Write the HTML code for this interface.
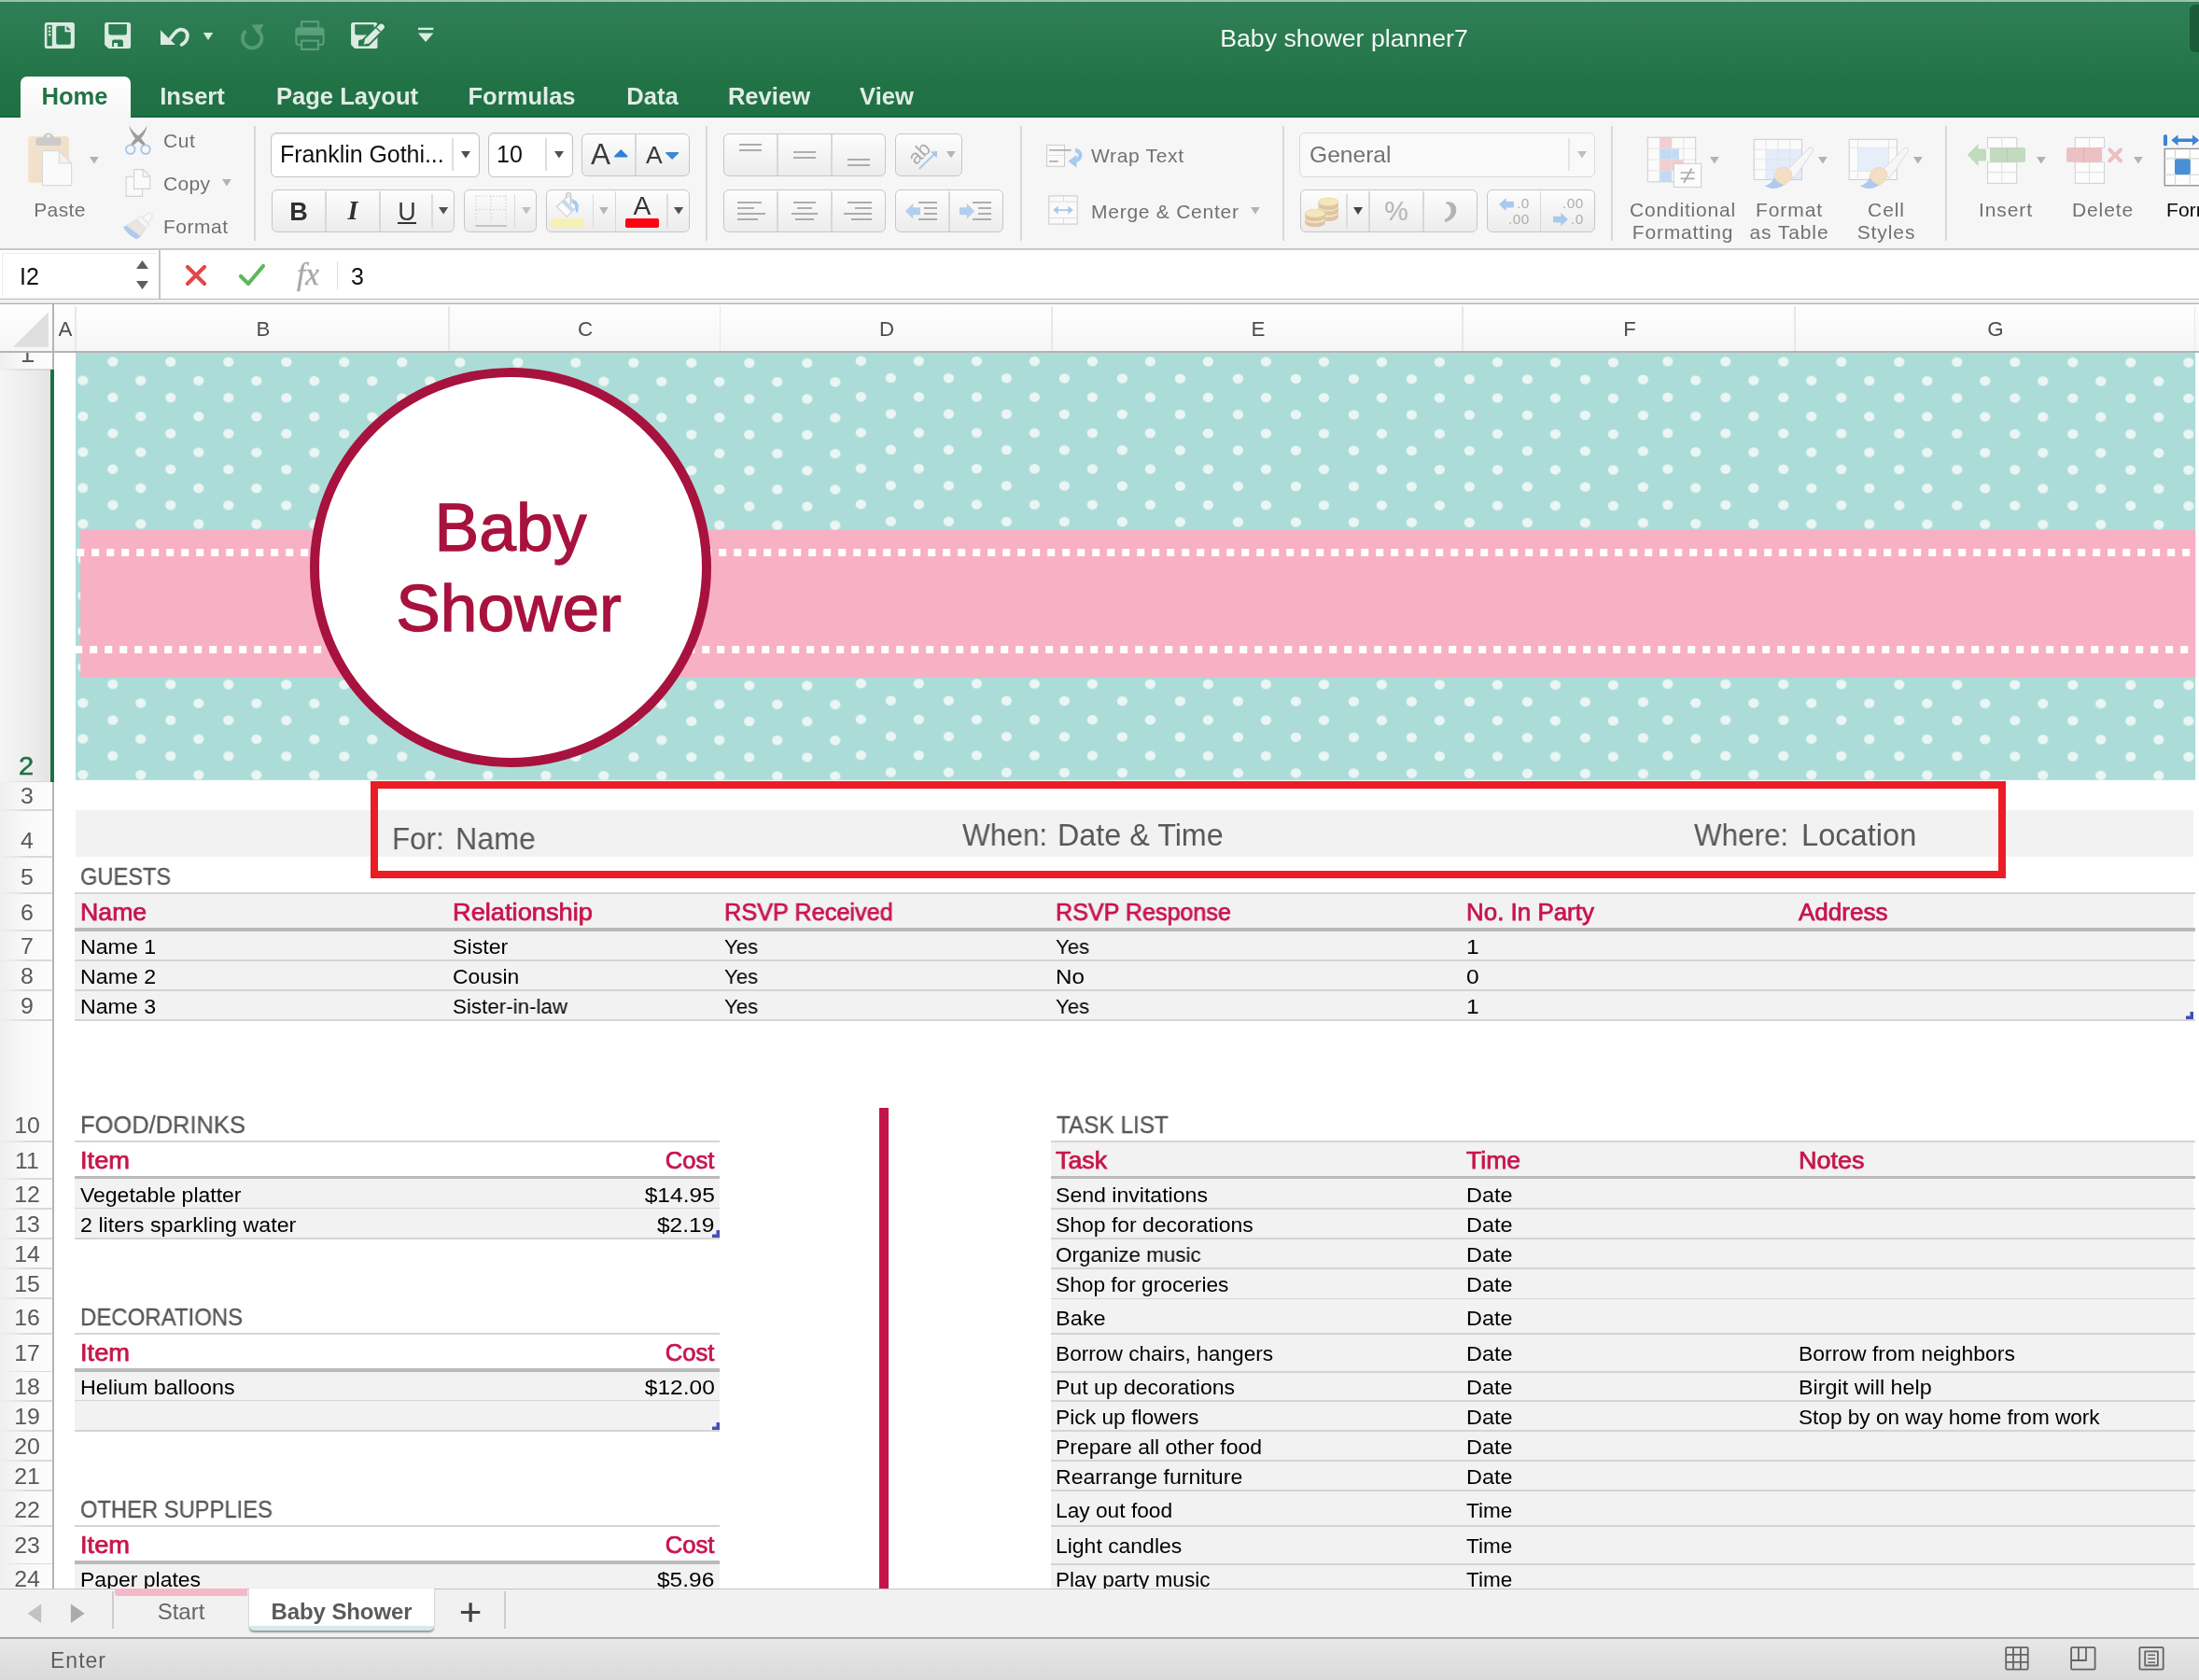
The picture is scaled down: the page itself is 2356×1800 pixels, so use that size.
<!DOCTYPE html>
<html lang="en"><head><meta charset="utf-8"><title>Baby shower planner7</title>
<style>
html,body{margin:0;padding:0;}
body{width:2356px;height:1800px;overflow:hidden;background:#fff;font-family:"Liberation Sans",sans-serif;position:relative;}
.a{position:absolute;box-sizing:border-box;}
.t{position:absolute;white-space:pre;line-height:1;will-change:transform;}
svg{position:absolute;overflow:visible;}
.btn{position:absolute;box-sizing:border-box;border:1.5px solid #c6c6c6;border-radius:6px;background:linear-gradient(#fdfdfd,#ececec);}
.box{position:absolute;box-sizing:border-box;border:1.5px solid #c3c3c3;border-radius:6px;background:#fff;}
.vd{position:absolute;width:1.5px;background:#d8d8d8;}
</style></head>
<body>
<div class="a" style="left:0px;top:0px;width:2356px;height:126px;background:linear-gradient(#2f7e55 0%,#2b7b51 30%,#217346 70%,#1f7145 100%);"></div>
<div class="a" style="left:0px;top:0px;width:2356px;height:1.6px;background:#9cc2ad;"></div>
<div class="a" style="left:0px;top:124.4px;width:2356px;height:1.6px;background:#186640;"></div>
<div class="a" style="left:2346px;top:5px;width:20px;height:51px;background:#1a5c38;border-radius:6px;"></div>
<div class="t" style="top:26px;line-height:30px;font-size:26.7px;color:#f3f8f5;left:1439.5px;transform:translateX(-50%);">Baby shower planner7</div>
<svg style="left:44px;top:20px" width="440" height="40" viewBox="44 20 440 40">
<!-- sidebar/doc icon -->
<path fill="#dcebe2" fill-rule="evenodd" d="M50.300 24h27.100a2.500 2.500 0 0 1 2.500 2.500v23a2.500 2.500 0 0 1 -2.500 2.500h-27.100a2.500 2.500 0 0 1 -2.500 -2.500v-23a2.500 2.500 0 0 1 2.500 -2.500z M50.400 26.800v22.400h5.400v-22.400z M60.200 29.800a2 2 0 0 1 2 -2h7.300v6.500h6.300v11.500a2 2 0 0 1 -2 2h-11.600a2 2 0 0 1 -2 -2z M71.500 27.800l4.300 4.500h-4.300z"/>
<g fill="#dcebe2"><rect x="51.900" y="28.600" width="2.400" height="2.200"/><rect x="51.900" y="32.400" width="2.400" height="2.200"/><rect x="51.900" y="36.200" width="2.400" height="2.200"/></g>
<!-- save icon -->
<path fill="#dcebe2" fill-rule="evenodd" d="M114.600 24h23a2.500 2.500 0 0 1 2.500 2.500v23a2.500 2.500 0 0 1 -2.500 2.500h-21.200l-4.300 -4v-21.500a2.500 2.500 0 0 1 2.500 -2.500z M116.300 25.900v9.500a2 2 0 0 0 2 2h15.600a2 2 0 0 0 2 -2v-9.500z M120.100 44.500a2 2 0 0 1 2 -2h7.800a2 2 0 0 1 2 2v5.600h-5.800v-4.100h-4.200v4.100h-1.800z"/>
<!-- undo -->
<path fill="none" stroke="#dcebe2" stroke-width="3.700" stroke-linecap="round" d="M182.600 41.200l4.200 -5.400c3.200 -4.300 9 -6 12.400 -2c3.200 3.800 1.800 10.800 -4.600 14"/>
<path fill="#dcebe2" d="M172 32.300v15.600h15.900z"/>
<path fill="#dcebe2" d="M217.800 35.100h10.400l-5.200 8z"/>
<!-- redo faded -->
<g opacity=".8"><path fill="none" stroke="#63a482" stroke-width="3.600" d="M263.500 33.200a10.300 10.300 0 1 0 11 -1.500"/>
<path fill="#63a482" d="M269.500 26.600l12.600 -0.700l-5.100 11.500z"/></g>
<!-- print faded -->
<g opacity=".85" fill="none" stroke="#63a482" stroke-width="2.200" stroke-linejoin="round">
<rect x="323" y="23.200" width="18" height="8"/>
<rect x="317.400" y="30.400" width="29.200" height="17.600" rx="3"/>
<rect x="323" y="43.600" width="18" height="9.300" fill="#2a7a50"/>
</g>
<rect x="318" y="31" width="28" height="6.800" fill="#63a482" opacity=".85"/>
<!-- edit/pen icon -->
<path fill="#dcebe2" fill-rule="evenodd" d="M378.600 24h23.300a2.500 2.500 0 0 1 2.500 2.500v23a2.500 2.500 0 0 1 -2.500 2.500h-21.500l-4.300 -4v-21.500a2.500 2.500 0 0 1 2.500 -2.500z M380.200 26.200v9.200a2 2 0 0 0 2 2h16.400a2 2 0 0 0 2 -2v-9.200z M384 44.500a2 2 0 0 1 2 -2h7v6.500h-3.500v-3.500h-3v3.500h-2.500z"/>
<path d="M388.800 48.600l21.500 -21.500" stroke="#2a7a50" stroke-width="10" stroke-linecap="round" fill="none"/>
<path fill="#dcebe2" d="M380.400 52l-2.700 -2.500h26.700a2.500 2.500 0 0 1 -2.500 2.500z"/>
<path d="M394 43.400l14.600 -14.600" stroke="#dcebe2" stroke-width="6.400" stroke-linecap="round" fill="none"/>
<path d="M391.700 41.100l4.600 4.600l-6.700 2.100z" fill="#dcebe2"/>
<path d="M403.100 29.700l4.600 4.600" stroke="#2a7a50" stroke-width="1.300" fill="none"/>
<!-- customize -->
<rect x="448" y="29.700" width="16.300" height="2.300" fill="#dcebe2"/>
<path fill="#dcebe2" d="M448 35.500h16.300l-8.150 9.500z"/>
</svg>
<div class="a" style="left:22px;top:82px;width:118px;height:46px;background:#f6f6f6;border-radius:7px 7px 0 0;background:linear-gradient(#ffffff,#f6f6f6);"></div>
<div class="t" style="top:89px;line-height:28px;font-size:25.6px;color:#217346;font-weight:700;left:80.25px;transform:translateX(-50%);">Home</div>
<div class="t" style="top:89px;line-height:28px;font-size:25.6px;color:#e1ece6;font-weight:700;left:206px;transform:translateX(-50%);">Insert</div>
<div class="t" style="top:89px;line-height:28px;font-size:25.6px;color:#e1ece6;font-weight:700;left:372px;transform:translateX(-50%);">Page Layout</div>
<div class="t" style="top:89px;line-height:28px;font-size:25.6px;color:#e1ece6;font-weight:700;left:559.2px;transform:translateX(-50%);">Formulas</div>
<div class="t" style="top:89px;line-height:28px;font-size:25.6px;color:#e1ece6;font-weight:700;left:698.8px;transform:translateX(-50%);">Data</div>
<div class="t" style="top:89px;line-height:28px;font-size:25.6px;color:#e1ece6;font-weight:700;left:823.5px;transform:translateX(-50%);">Review</div>
<div class="t" style="top:89px;line-height:28px;font-size:25.6px;color:#e1ece6;font-weight:700;left:949.5px;transform:translateX(-50%);">View</div>
<div class="a" style="left:0px;top:126px;width:2356px;height:141px;background:#f6f6f6;"></div>
<div class="a" style="left:22px;top:126px;width:118px;height:3px;background:#f6f6f6;"></div>
<div class="a" style="left:0px;top:266px;width:2356px;height:2px;background:#c9c9c9;"></div>
<svg style="left:28px;top:138px" width="52" height="64" viewBox="28 138 52 64">
<defs><linearGradient id="pg" x1="0" y1="0" x2="1" y2="1"><stop offset="0" stop-color="#f3e4cf"/><stop offset="1" stop-color="#efdcc4"/></linearGradient></defs>
<rect x="30.200" y="146.100" width="43.600" height="49.700" rx="3.500" fill="url(#pg)"/>
<path fill="#cbcbcb" fill-rule="evenodd" d="M41 155.900a2.800 2.800 0 0 1 -2.800 -2.800v-2.300a3.600 3.600 0 0 1 3.600 -3.600h4.400a5.800 5.800 0 0 1 11.400 0h4.400a3.600 3.600 0 0 1 3.600 3.600v2.300a2.800 2.800 0 0 1 -2.800 2.800z M51.900 144.300a1.900 1.900 0 1 0 0.010 0z"/>
<path d="M45.500 161.600h17.800l13.300 13.300v23.700h-31.100z" fill="#fafafa" stroke="#dadada" stroke-width="1.100"/>
<path d="M63.300 161.600v13.300h13.300z" fill="#f1f1f1" stroke="#dadada" stroke-width="1.100" stroke-linejoin="round"/>
</svg>
<svg style="left:96.1px;top:168.0px" width="9.8" height="7.4" viewBox="0 0 9.8 7.4"><path d="M0 0h9.8l-4.9 7.4z" fill="#b2b2b2"/></svg>
<div class="t" style="top:213px;line-height:23px;font-size:21px;color:#717171;letter-spacing:0.4px;left:64px;transform:translateX(-50%);">Paste</div>
<svg style="left:130px;top:130px" width="40" height="130" viewBox="130 130 40 130">
<path d="M138.200 134.300c2.500 5 6.500 9 11.600 12.500l6 7.500l-2.200 1.700l-7.400 -6.200c-4 -4.300 -6.800 -9.300 -8 -15.500z" fill="#9c9c9c"/>
<path d="M157.800 134.300c-2.500 5 -6.500 9 -11.600 12.500l-6 7.500l2.200 1.700l7.400 -6.200c4 -4.300 6.800 -9.300 8 -15.500z" fill="#9c9c9c"/>
<circle cx="139.800" cy="160.100" r="4.800" fill="none" stroke="#9fc3ea" stroke-width="1.800"/>
<circle cx="156" cy="160.100" r="4.800" fill="none" stroke="#9fc3ea" stroke-width="1.800"/>
<path d="M135.200 189.300h17.300v21.100h-17.300z" fill="#fafafa" stroke="#d2d2d2" stroke-width="1.100"/>
<path d="M143.500 181.600h9.700l7.500 7.500v13.300h-17.200z" fill="#fafafa" stroke="#d2d2d2" stroke-width="1.100"/>
<path d="M153.200 181.600v7.500h7.500" fill="none" stroke="#d2d2d2" stroke-width="1.100"/>
<path d="M132 243.500l3.500 -2l15.500 11.500l-4.500 3.200c-6 -2.500 -11 -7 -14.500 -12.700z" fill="#aecbee"/>
<path d="M135.500 241.500l11 -6.500l9.500 9.500l-5 8.500z" fill="#e9e6e2" stroke="#dcdcdc" stroke-width=".8"/>
<path d="M146.500 235l3.800 -3.800l9.300 9.300l-3.600 4z" fill="#f6f6f6" stroke="#d8d8d8" stroke-width=".8"/>
<path d="M152.500 233.500l5.800 -4.800c2.800 -1.800 6.200 1.200 4.600 4.200l-3.900 6.600z" fill="#f7f7f7" stroke="#d8d8d8" stroke-width=".8"/>
</svg>
<div class="t" style="top:139px;line-height:23px;font-size:21px;color:#717171;letter-spacing:0.6px;left:175px;">Cut</div>
<div class="t" style="top:185px;line-height:23px;font-size:21px;color:#717171;letter-spacing:0.3px;left:175px;">Copy</div>
<svg style="left:238.0px;top:192.20000000000002px" width="9.8" height="7.4" viewBox="0 0 9.8 7.4"><path d="M0 0h9.8l-4.9 7.4z" fill="#b2b2b2"/></svg>
<div class="t" style="top:231px;line-height:23px;font-size:21px;color:#717171;letter-spacing:0.5px;left:175.3px;">Format</div>
<div class="vd" style="left:272.15px;top:134.5px;height:123.0px"></div>
<div class="box" style="left:290.200px;top:142.300px;width:223.400px;height:47.400px;box-shadow:inset 0 1px 1.500px rgba(0,0,0,.10);"></div>
<div class="t" style="top:151px;line-height:28px;font-size:25px;color:#111;letter-spacing:-0.05px;left:300.2px;">Franklin Gothi...</div>
<div class="vd" style="left:484px;top:148.300px;height:35px;background:#dedede"></div>
<svg style="left:493.9px;top:162.29999999999998px" width="10" height="7.6" viewBox="0 0 10 7.6"><path d="M0 0h10l-5.0 7.6z" fill="#505050"/></svg>
<div class="box" style="left:522.500px;top:142.300px;width:91px;height:47.400px;box-shadow:inset 0 1px 1.500px rgba(0,0,0,.10);"></div>
<div class="t" style="top:151px;line-height:28px;font-size:25px;color:#111;left:531.5px;">10</div>
<div class="vd" style="left:584.400px;top:148.300px;height:35px;background:#dedede"></div>
<svg style="left:594.0px;top:162.29999999999998px" width="10" height="7.6" viewBox="0 0 10 7.6"><path d="M0 0h10l-5.0 7.6z" fill="#505050"/></svg>
<div class="btn" style="left:623px;top:142.900px;width:116px;height:46.200px"></div>
<div class="vd" style="left:680.300px;top:144.400px;height:43.200px"></div>
<div class="t" style="top:147px;line-height:36px;font-size:31.5px;color:#3a3a3a;left:632.5px;">A</div>
<div class="t" style="top:151px;line-height:30px;font-size:26.5px;color:#3a3a3a;left:692px;">A</div>
<svg style="left:657.800px;top:159.700px" width="14.500" height="8.400" viewBox="0 0 14.500 8.400"><path d="M0.800 8.400h12.900a0.800 0.800 0 0 0 .6 -1.300l-7.050 -7.100l-7.050 7.100a0.800 0.800 0 0 0 .6 1.300z" fill="#2f80d9"/></svg>
<svg style="left:712.800px;top:163.200px" width="14.300" height="8" viewBox="0 0 14.300 8"><path d="M0.800 0h12.700a0.800 0.800 0 0 1 .6 1.300l-6.950 6.700l-6.950 -6.700a0.800 0.800 0 0 1 .6 -1.300z" fill="#3f86d4"/></svg>
<div class="btn" style="left:290.800px;top:203px;width:196.200px;height:46.300px"></div>
<div class="vd" style="left:348px;top:204.500px;height:43.300px"></div>
<div class="vd" style="left:406px;top:204.500px;height:43.300px"></div>
<div class="vd" style="left:462.300px;top:208px;height:36px;background:#dcdcdc"></div>
<div class="t" style="top:212px;line-height:30px;font-size:27px;color:#303030;font-weight:700;left:320px;transform:translateX(-50%);">B</div>
<div class="t" style="top:210px;line-height:32px;font-size:28.5px;color:#303030;font-weight:700;font-family:'Liberation Serif',serif;left:377.5px;transform:translateX(-50%);font-style:italic;">I</div>
<div class="t" style="top:212px;line-height:30px;font-size:27px;color:#3a3a3a;left:436px;transform:translateX(-50%);">U</div>
<div class="a" style="left:426.2px;top:238px;width:19.6px;height:2px;background:#333;"></div>
<svg style="left:469.7px;top:222.2px" width="10.2" height="7.6" viewBox="0 0 10.2 7.6"><path d="M0 0h10.2l-5.1 7.6z" fill="#505050"/></svg>
<div class="btn" style="left:497.100px;top:203px;width:78px;height:46.300px"></div>
<svg style="left:508px;top:207px" width="38" height="38" viewBox="508 207 38 38"><g stroke="#dadada" stroke-width="1.600" stroke-dasharray="1.600 2.150" fill="none"><path d="M509.200 210.200h33.800"/><path d="M510 209.400v30"/><path d="M542.100 209.400v30"/><path d="M526 209.400v30"/><path d="M509.200 224.500h33.800"/></g><path d="M509.200 242h33.700" stroke="#c4c4c4" stroke-width="1.800"/></svg>
<div class="vd" style="left:550.500px;top:208px;height:36px;background:#dcdcdc"></div>
<svg style="left:558.6px;top:222.3px" width="9.8" height="7.4" viewBox="0 0 9.8 7.4"><path d="M0 0h9.8l-4.9 7.4z" fill="#c0c0c0"/></svg>
<div class="btn" style="left:585.200px;top:203px;width:153.700px;height:46.300px"></div>
<div class="vd" style="left:658.500px;top:204.500px;height:43.300px"></div>
<div class="vd" style="left:634.500px;top:208px;height:36px;background:#dcdcdc"></div>
<div class="vd" style="left:714px;top:208px;height:36px;background:#dcdcdc"></div>
<svg style="left:588px;top:204px" width="42" height="42" viewBox="588 204 42 42">
<rect x="590.200" y="234.200" width="35.600" height="9.600" rx="1.800" fill="#f5f1b2"/>
<path d="M596.500 221.500l12.300 -12.300l10.800 10.800l-12.300 12.300z" fill="#fbfbfb" stroke="#cfcfcf" stroke-width="1.100"/>
<path d="M601.500 216.500l3 -3l10.800 10.800l-3 3z" fill="#c3daf3"/>
<path d="M611.500 219.500v-10.500a2.400 2.400 0 0 0 -4.800 0v4" fill="none" stroke="#c6c6c6" stroke-width="1.300"/>
<path d="M612.500 214.200c5 -.5 7.300 3 7.300 7.500c0 3 -.5 6 -1.500 6.300c-1.300 0 -1.800 -2.500 -2 -5c-.2 -3 -1.300 -5.300 -3.800 -5.800z" fill="#a9c9ee"/>
</svg>
<svg style="left:642.1px;top:222.10000000000002px" width="9.8" height="7.4" viewBox="0 0 9.8 7.4"><path d="M0 0h9.8l-4.9 7.4z" fill="#b4b4b4"/></svg>
<div class="t" style="top:204px;line-height:32px;font-size:28.3px;color:#333;left:688px;transform:translateX(-50%);">A</div>
<div class="a" style="left:670.1px;top:234.2px;width:35.9px;height:9.6px;background:#fb0414;border-radius:1.800px;"></div>
<svg style="left:721.9px;top:222.10000000000002px" width="10.2" height="7.4" viewBox="0 0 10.2 7.4"><path d="M0 0h10.2l-5.1 7.4z" fill="#505050"/></svg>
<div class="vd" style="left:756.25px;top:134.5px;height:123.0px"></div>
<div class="btn" style="left:775.200px;top:142.900px;width:173.800px;height:46.200px"></div>
<div class="vd" style="left:832px;top:144.400px;height:43.200px"></div><div class="vd" style="left:890.200px;top:144.400px;height:43.200px"></div>
<div class="btn" style="left:775.200px;top:203px;width:173.800px;height:46.300px"></div>
<div class="vd" style="left:832px;top:204.500px;height:43.300px"></div><div class="vd" style="left:890.200px;top:204.500px;height:43.300px"></div>
<div class="a" style="left:792px;top:154.3px;width:23.899999999999977px;height:1.8px;background:#adadad;"></div>
<div class="a" style="left:792px;top:160.2px;width:23.899999999999977px;height:1.8px;background:#adadad;"></div>
<div class="a" style="left:850.1px;top:162px;width:23.799999999999955px;height:1.8px;background:#adadad;"></div>
<div class="a" style="left:850.1px;top:168px;width:23.799999999999955px;height:1.8px;background:#adadad;"></div>
<div class="a" style="left:908px;top:170px;width:23.899999999999977px;height:1.8px;background:#adadad;"></div>
<div class="a" style="left:908px;top:176.1px;width:23.899999999999977px;height:1.8px;background:#adadad;"></div>
<div class="a" style="left:790.2px;top:216.1px;width:25.699999999999932px;height:1.8px;background:#adadad;"></div>
<div class="a" style="left:790.2px;top:222.1px;width:17.399999999999977px;height:1.8px;background:#adadad;"></div>
<div class="a" style="left:790.2px;top:228.1px;width:29.5px;height:1.8px;background:#adadad;"></div>
<div class="a" style="left:790.2px;top:234.2px;width:21.5px;height:1.8px;background:#adadad;"></div>
<div class="a" style="left:850.1px;top:216.1px;width:23.799999999999955px;height:1.8px;background:#adadad;"></div>
<div class="a" style="left:853.9px;top:222.1px;width:16.200000000000045px;height:1.8px;background:#adadad;"></div>
<div class="a" style="left:848.2px;top:228.1px;width:27.59999999999991px;height:1.8px;background:#adadad;"></div>
<div class="a" style="left:852px;top:234.2px;width:20px;height:1.8px;background:#adadad;"></div>
<div class="a" style="left:908px;top:216.1px;width:25.799999999999955px;height:1.8px;background:#adadad;"></div>
<div class="a" style="left:916.2px;top:222.1px;width:17.59999999999991px;height:1.8px;background:#adadad;"></div>
<div class="a" style="left:904.1px;top:228.1px;width:29.699999999999932px;height:1.8px;background:#adadad;"></div>
<div class="a" style="left:912.1px;top:234.2px;width:21.699999999999932px;height:1.8px;background:#adadad;"></div>
<div class="btn" style="left:959px;top:142.900px;width:72px;height:46.200px"></div>
<svg style="left:966px;top:146px" width="44" height="40" viewBox="966 146 44 40"><text x="0" y="0" font-size="21.500" fill="#ababab" font-family="Liberation Sans, sans-serif" transform="translate(981.500 177.500) rotate(-45)">ab</text><path d="M984.800 181l16.500 -16.200" stroke="#a4c8ee" stroke-width="1.800" fill="none"/><path d="M996.800 162.600l7.400 -0.600l-0.600 7.400z" fill="#a4c8ee"/></svg>
<svg style="left:1014.0px;top:162.3px" width="9.8" height="7.2" viewBox="0 0 9.8 7.2"><path d="M0 0h9.8l-4.9 7.2z" fill="#b4b4b4"/></svg>
<div class="btn" style="left:959px;top:203px;width:115.700px;height:46.300px"></div>
<div class="vd" style="left:1016.200px;top:204.500px;height:43.300px"></div>
<div class="a" style="left:984px;top:216.1px;width:19.799999999999955px;height:1.8px;background:#adadad;"></div>
<div class="a" style="left:990.2px;top:222.1px;width:13.599999999999909px;height:1.8px;background:#adadad;"></div>
<div class="a" style="left:990.2px;top:228.1px;width:13.599999999999909px;height:1.8px;background:#adadad;"></div>
<div class="a" style="left:984px;top:234.2px;width:19.799999999999955px;height:1.8px;background:#adadad;"></div>
<div class="a" style="left:1042px;top:216.1px;width:19.700000000000045px;height:1.8px;background:#adadad;"></div>
<div class="a" style="left:1048.1px;top:222.1px;width:13.600000000000136px;height:1.8px;background:#adadad;"></div>
<div class="a" style="left:1048.1px;top:228.1px;width:13.600000000000136px;height:1.8px;background:#adadad;"></div>
<div class="a" style="left:1042px;top:234.2px;width:19.700000000000045px;height:1.8px;background:#adadad;"></div>
<svg style="left:970px;top:217.900px" width="16" height="16.400" viewBox="0 0 16 16.400"><path d="M0 8.200l8.200 -8.200v4.200h6.800a1 1 0 0 1 1 1v6a1 1 0 0 1 -1 1h-6.800v4.200z" fill="#b2cfee"/></svg>
<svg style="left:1028px;top:217.900px" width="16" height="16.400" viewBox="0 0 16 16.400"><path d="M16 8.200l-8.200 -8.200v4.200h-6.800a1 1 0 0 0 -1 1v6a1 1 0 0 0 1 1h6.800v4.200z" fill="#b2cfee"/></svg>
<div class="vd" style="left:1093.45px;top:134.5px;height:123.0px"></div>
<svg style="left:1120px;top:153px" width="42" height="30" viewBox="1120 153 42 30">
<rect x="1121.500" y="155.500" width="19" height="22.800" fill="#fafafa" stroke="#cdcdcd" stroke-width="1.100"/>
<path d="M1121.500 166.500h19" stroke="#e2e2e2" stroke-width="1"/>
<path d="M1124.200 160.800h23.500M1124.200 172.900h9.600" stroke="#b0b0b0" stroke-width="1.700"/>
<path d="M1152 158.700c10 1.500 10 13.500 0 15.700l0 -4.600c4.500 -1.200 4.500 -5.700 0 -6.600z" fill="#a9c9ee"/>
<path d="M1153.500 165.800l0 14l-9 -7z" fill="#a9c9ee"/>
</svg>
<div class="t" style="top:155px;line-height:23px;font-size:21px;color:#717171;letter-spacing:0.65px;left:1169px;">Wrap Text</div>
<svg style="left:1122px;top:208px" width="34" height="34" viewBox="1122 208 34 34">
<rect x="1123.800" y="209.900" width="30.400" height="30.200" fill="#fafafa" stroke="#cdcdcd" stroke-width="1.100"/>
<path d="M1123.800 216.100h30.400M1123.800 233.600h30.400M1139.500 209.900v6.200M1139.500 233.600v6.500" stroke="#dcdcdc" stroke-width="1"/>
<path d="M1132 225.100h14" stroke="#a9c9ee" stroke-width="1.900"/><path d="M1128.300 225.100l5.400 -4.700v9.400zM1149.700 225.100l-5.400 -4.700v9.400z" fill="#a9c9ee"/>
</svg>
<div class="t" style="top:215px;line-height:23px;font-size:21px;color:#717171;letter-spacing:0.75px;left:1169px;">Merge &amp; Center</div>
<svg style="left:1340.0px;top:222.10000000000002px" width="9.8" height="7.4" viewBox="0 0 9.8 7.4"><path d="M0 0h9.8l-4.9 7.4z" fill="#b2b2b2"/></svg>
<div class="vd" style="left:1374.25px;top:134.5px;height:123.0px"></div>
<div class="box" style="left:1392.400px;top:142.400px;width:317.100px;height:47.300px;background:#f9f9f9;border-color:#dadada"></div>
<div class="t" style="top:152px;line-height:27px;font-size:24.6px;color:#727272;left:1403px;">General</div>
<div class="vd" style="left:1680px;top:148.300px;height:35px;background:#e4e4e4"></div>
<svg style="left:1690.0px;top:162.3px" width="10" height="7.4" viewBox="0 0 10 7.4"><path d="M0 0h10l-5.0 7.4z" fill="#c0c0c0"/></svg>
<div class="btn" style="left:1393px;top:203.200px;width:190px;height:46.100px"></div>
<div class="vd" style="left:1466px;top:204.700px;height:43.100px"></div><div class="vd" style="left:1524.100px;top:204.700px;height:43.100px"></div>
<div class="vd" style="left:1442.200px;top:208.400px;height:35.400px;background:#dcdcdc"></div>
<svg style="left:1396px;top:208px" width="42" height="38" viewBox="1396 208 42 38"><path d="M1412.5 228.5v4.200a10.700 4.300 0 0 0 21.400 0v-4.200z" fill="#dcc4a6"/><ellipse cx="1423.2" cy="228.5" rx="10.700" ry="4.300" fill="#f5e6bb" stroke="#e6d3a8" stroke-width=".7"/><path d="M1412.5 222.3v4.200a10.700 4.300 0 0 0 21.400 0v-4.200z" fill="#dcc4a6"/><ellipse cx="1423.2" cy="222.3" rx="10.700" ry="4.300" fill="#f5e6bb" stroke="#e6d3a8" stroke-width=".7"/><path d="M1412.5 216.4v4.200a10.700 4.300 0 0 0 21.400 0v-4.200z" fill="#dcc4a6"/><ellipse cx="1423.2" cy="216.4" rx="10.700" ry="4.300" fill="#f5e6bb" stroke="#e6d3a8" stroke-width=".7"/><path d="M1398.3 234.8v4.200a10.700 4.300 0 0 0 21.400 0v-4.200z" fill="#dcc4a6"/><ellipse cx="1409" cy="234.8" rx="10.700" ry="4.300" fill="#f5e6bb" stroke="#e6d3a8" stroke-width=".7"/><path d="M1398.3 228.6v4.200a10.700 4.300 0 0 0 21.400 0v-4.200z" fill="#dcc4a6"/><ellipse cx="1409" cy="228.6" rx="10.700" ry="4.300" fill="#f5e6bb" stroke="#e6d3a8" stroke-width=".7"/></svg>
<svg style="left:1450.0px;top:222.1px" width="10" height="8" viewBox="0 0 10 8"><path d="M0 0h10l-5.0 8z" fill="#444"/></svg>
<div class="t" style="top:209px;line-height:33px;font-size:30px;color:#b0b0b0;left:1496px;transform:translateX(-50%) scaleX(0.96);">%</div>
<svg style="left:1546px;top:215px" width="16" height="25" viewBox="1546 215 16 25"><path d="M1549.500 216.400c7 -1 11.500 3.500 10.700 9.500c-.8 6 -5 10 -12 12.300l-.3 -3.200c4.500 -2 6.600 -5.500 6.600 -9.600c0 -3.500 -1.600 -6.500 -5.500 -7.500z" fill="#b3b3b3"/></svg>
<div class="btn" style="left:1593.300px;top:203.200px;width:115.800px;height:46.100px"></div>
<div class="vd" style="left:1649.900px;top:204.700px;height:43.100px"></div>
<div class="t" style="top:209px;line-height:17px;font-size:15.3px;color:#adadad;letter-spacing:0.5px;right:717.4000000000001px;">.0</div>
<div class="t" style="top:226px;line-height:17px;font-size:15.3px;color:#adadad;letter-spacing:0.5px;right:717.4000000000001px;">.00</div>
<div class="t" style="top:209px;line-height:17px;font-size:15.3px;color:#adadad;letter-spacing:0.5px;right:659.4000000000001px;">.00</div>
<div class="t" style="top:226px;line-height:17px;font-size:15.3px;color:#adadad;letter-spacing:0.5px;right:659.4000000000001px;">.0</div>
<svg style="left:1606px;top:211.900px" width="16" height="14.200" viewBox="0 0 16 14.200"><path d="M0 7.100l7.600 -7.100v3.800h7.400a1 1 0 0 1 1 1v4.600a1 1 0 0 1 -1 1h-7.400v3.800z" fill="#a9c9ee"/></svg>
<svg style="left:1664px;top:227.800px" width="16" height="14.200" viewBox="0 0 16 14.200"><path d="M16 7.100l-7.600 -7.100v3.800h-7.400a1 1 0 0 0 -1 1v4.600a1 1 0 0 0 1 1h7.400v3.800z" fill="#a9c9ee"/></svg>
<div class="vd" style="left:1726.25px;top:134.5px;height:123.0px"></div>
<svg style="left:1764px;top:146px" width="62" height="58" viewBox="1764 146 62 58">
<rect x="1765.3" y="147.2" width="51.4" height="47.6" fill="#fbfbfb"/>
<rect x="1778.1499999999999" y="147.2" width="12.85" height="11.9" fill="#f3cdd0"/><rect x="1778.1499999999999" y="159.1" width="20.817" height="11.9" fill="#c3daf3"/>
<rect x="1778.1499999999999" y="171.0" width="25.7" height="11.9" fill="#f3cdd0"/><rect x="1778.1499999999999" y="182.89999999999998" width="12.85" height="11.9" fill="#c3daf3"/>
<path d="M1778.1499999999999 147.2v47.6M1791.0 147.2v47.6M1803.85 147.2v47.6M1765.3 159.1h51.4M1765.3 171.0h51.4M1765.3 182.89999999999998h51.4" stroke="#e2e2e2" stroke-width=".9" fill="none"/>
<rect x="1765.3" y="147.2" width="51.4" height="47.6" fill="none" stroke="#d0d0d0" stroke-width="1.100"/>
<rect x="1793.300" y="175.300" width="29.300" height="25.200" fill="#fcfcfc" stroke="#d0d0d0" stroke-width="1.100"/>
<path d="M1800.500 185h15M1800.500 191.300h15M1812.500 180.500l-8.500 15.500" stroke="#ababab" stroke-width="1.700" fill="none"/>
</svg>
<svg style="left:1832.1999999999998px;top:168.0px" width="9.8" height="7.4" viewBox="0 0 9.8 7.4"><path d="M0 0h9.8l-4.9 7.4z" fill="#b2b2b2"/></svg>
<div class="t" style="top:213px;line-height:23px;font-size:21px;color:#717171;letter-spacing:0.8px;left:1802.7px;transform:translateX(-50%);">Conditional</div>
<div class="t" style="top:237px;line-height:23px;font-size:21px;color:#717171;letter-spacing:0.8px;left:1802.8px;transform:translateX(-50%);">Formatting</div>
<svg style="left:1878px;top:146px" width="70" height="60" viewBox="1878 146 70 60">
<rect x="1879.3" y="149.4" width="51.2" height="43.12" fill="#fbfbfb"/>
<rect x="1892.1" y="160.18" width="38.400000000000006" height="32.339999999999996" fill="#e3ecf8"/>
<path d="M1892.1 149.4v43.12M1904.8999999999999 149.4v43.12M1917.7 149.4v43.12M1879.3 160.18h51.2M1879.3 170.96h51.2M1879.3 181.74h51.2" stroke="#dfe3e8" stroke-width=".9" fill="none"/>
<rect x="1879.3" y="149.4" width="51.2" height="43.12" fill="none" stroke="#d0d0d0" stroke-width="1.100"/>
<g transform="translate(0 0)">
<path d="M1913.500 183.500l24.500 -24.500c2.200 -2 5.600 .2 4.300 3l-19.800 28.800z" fill="#f6f6f6" stroke="#d6d6d6" stroke-width=".9"/>
<path d="M1900.500 190c1 -7 6 -11.500 12.500 -10.500c5 1 7.800 5.500 6.300 10c-1.500 5 -5.500 8.500 -10.300 9.500z" fill="#f3dfc3" stroke="#ead4b4" stroke-width=".6"/>
<path d="M1890.500 199c5.500 -1.200 9 -4.500 10.300 -9c2.300 4 5.700 6.700 10.200 8c-5.500 5 -14 5.500 -20.500 1z" fill="#aecbee"/>
</g>
</svg>
<svg style="left:1947.8999999999999px;top:168.0px" width="9.8" height="7.4" viewBox="0 0 9.8 7.4"><path d="M0 0h9.8l-4.9 7.4z" fill="#b2b2b2"/></svg>
<div class="t" style="top:213px;line-height:23px;font-size:21px;color:#717171;letter-spacing:0.9px;left:1917.1px;transform:translateX(-50%);">Format</div>
<div class="t" style="top:237px;line-height:23px;font-size:21px;color:#717171;letter-spacing:0.9px;left:1917.2px;transform:translateX(-50%);">as Table</div>
<svg style="left:1979px;top:146px" width="72" height="60" viewBox="1979 146 72 60">
<rect x="1981.200" y="149.400" width="51.200" height="43.100" fill="#fbfbfb" stroke="#d0d0d0" stroke-width="1.100"/>
<rect x="1990.500" y="158.300" width="33.100" height="25" fill="#e6eef9"/>
<path d="M1990.500 149.400v43.100M2023.600 149.400v43.100M1981.200 158.300h51.200M1981.200 183.300h51.200" stroke="#dfe3e8" stroke-width=".9" fill="none"/>
<g transform="translate(102.2 0)">
<path d="M1913.500 183.500l24.500 -24.500c2.200 -2 5.600 .2 4.300 3l-19.800 28.800z" fill="#f6f6f6" stroke="#d6d6d6" stroke-width=".9"/>
<path d="M1900.500 190c1 -7 6 -11.500 12.500 -10.500c5 1 7.800 5.500 6.300 10c-1.500 5 -5.500 8.500 -10.300 9.500z" fill="#f3dfc3" stroke="#ead4b4" stroke-width=".6"/>
<path d="M1890.500 199c5.500 -1.200 9 -4.500 10.300 -9c2.300 4 5.700 6.700 10.200 8c-5.500 5 -14 5.500 -20.500 1z" fill="#aecbee"/>
</g>
</svg>
<svg style="left:2050.1px;top:168.0px" width="9.8" height="7.4" viewBox="0 0 9.8 7.4"><path d="M0 0h9.8l-4.9 7.4z" fill="#b2b2b2"/></svg>
<div class="t" style="top:213px;line-height:23px;font-size:21px;color:#717171;letter-spacing:0.9px;left:2020.5px;transform:translateX(-50%);">Cell</div>
<div class="t" style="top:237px;line-height:23px;font-size:21px;color:#717171;letter-spacing:0.9px;left:2020.5px;transform:translateX(-50%);">Styles</div>
<div class="vd" style="left:2084.15px;top:134.5px;height:123.0px"></div>
<svg style="left:2105px;top:146px" width="68" height="54" viewBox="2105 146 68 54">
<rect x="2129.500" y="147.400" width="31.200" height="11.100" fill="#fcfcfc" stroke="#d2d2d2" stroke-width="1.100"/>
<rect x="2129.500" y="173.700" width="31.200" height="22.700" fill="#fcfcfc" stroke="#d2d2d2" stroke-width="1.100"/>
<path d="M2144.800 147.400v11.100M2144.800 173.700v22.700M2129.500 184.600h31.200" stroke="#dedede" stroke-width="1" fill="none"/>
<rect x="2132" y="158.100" width="38" height="15.600" rx="2" fill="#c3d9c0"/>
<path d="M2150.500 158.100v15.600" stroke="#b4cdb1" stroke-width="1"/>
<path d="M2107.800 166l11.700 -12v5.500h7.500a1 1 0 0 1 1 1v11a1 1 0 0 1 -1 1h-7.500v5.500z" fill="#c0dbbd"/>
</svg>
<svg style="left:2182.2px;top:168.0px" width="9.8" height="7.4" viewBox="0 0 9.8 7.4"><path d="M0 0h9.8l-4.9 7.4z" fill="#b2b2b2"/></svg>
<div class="t" style="top:213px;line-height:23px;font-size:21px;color:#717171;letter-spacing:0.9px;left:2149px;transform:translateX(-50%);">Insert</div>
<svg style="left:2211px;top:146px" width="70" height="54" viewBox="2211 146 70 54">
<rect x="2223.300" y="147.400" width="31.200" height="11.100" fill="#fcfcfc" stroke="#d2d2d2" stroke-width="1.100"/>
<rect x="2223.300" y="173.700" width="31.200" height="22.700" fill="#fcfcfc" stroke="#d2d2d2" stroke-width="1.100"/>
<path d="M2238.600 147.400v11.100M2238.600 173.700v22.700M2223.300 184.600h31.200" stroke="#dedede" stroke-width="1" fill="none"/>
<rect x="2214.100" y="158.100" width="38" height="15.600" rx="2" fill="#ecc1c3"/>
<path d="M2232.500 158.100v15.600" stroke="#e0b0b3" stroke-width="1"/>
<path d="M2260.300 160.500l11.700 11.700M2272 160.500l-11.700 11.700" stroke="#ecc0c3" stroke-width="4.200" stroke-linecap="round" fill="none"/>
</svg>
<svg style="left:2286.1px;top:168.0px" width="9.8" height="7.4" viewBox="0 0 9.8 7.4"><path d="M0 0h9.8l-4.9 7.4z" fill="#b2b2b2"/></svg>
<div class="t" style="top:213px;line-height:23px;font-size:21px;color:#717171;letter-spacing:0.9px;left:2252.5px;transform:translateX(-50%);">Delete</div>
<svg style="left:2316px;top:142px" width="40" height="60" viewBox="2316 142 40 60">
<rect x="2317.900" y="144.200" width="4.100" height="12" rx="1.500" fill="#3d84d2"/>
<path d="M2326.200 150.200l7.300 -5.800v4h15.500v-4l7.300 5.800l-7.300 5.800v-4h-15.500v4z" fill="#3d84d2"/>
<rect x="2319.200" y="159.400" width="42" height="39.400" fill="#fdfdfd" stroke="#8c8c8c" stroke-width="1.300"/>
<path d="M2330.600 159.400v39.400M2346.200 159.400v39.400M2319.200 169.900h42M2319.200 187.100h42" stroke="#cfcfcf" stroke-width="1" fill="none"/>
<rect x="2330" y="170.200" width="16.800" height="16.700" rx="2.200" fill="#4a8fd6"/>
</svg>
<div class="t" style="top:213px;line-height:23px;font-size:21px;color:#0a0a0a;letter-spacing:0.1px;left:2320.6px;">Format</div>
<div class="a" style="left:0px;top:268px;width:2356px;height:53px;background:#fff;"></div>
<div class="a" style="left:170.3px;top:268px;width:1.5px;height:53px;background:#c4c4c4;"></div>
<div class="t" style="top:282px;line-height:28px;font-size:25px;color:#111;left:21px;">I2</div>
<div class="a" style="left:2px;top:270.500px;width:166px;height:48px;border:1.200px solid #ececec;border-right:none;border-bottom-color:#f4f4f4"></div>
<svg style="left:146.300px;top:278px" width="13" height="34" viewBox="0 0 13 34"><path d="M0 10h13l-6.500 -9z" fill="#5e5e5e"/><path d="M0 23h13l-6.500 9z" fill="#5e5e5e"/></svg>
<svg style="left:198px;top:283px" width="24" height="24" viewBox="0 0 24 24"><path d="M3 3l18 18M21 3l-18 18" stroke="#e04848" stroke-width="4.200" stroke-linecap="round"/></svg>
<svg style="left:255px;top:283px" width="30" height="24" viewBox="0 0 30 24"><path d="M3 13l8 8l16 -19" stroke="#5cb85c" stroke-width="4.200" stroke-linecap="round" stroke-linejoin="round" fill="none"/></svg>
<div class="t" style="top:276px;line-height:37px;font-size:33px;color:#a8a8a8;font-family:'Liberation Serif',serif;left:330px;transform:translateX(-50%);font-style:italic;-webkit-text-stroke:.4px #a8a8a8;">fx</div>
<div class="a" style="left:360.5px;top:280px;width:1.5px;height:30px;background:#dcdcdc;"></div>
<div class="t" style="top:282px;line-height:28px;font-size:25px;color:#111;left:376px;">3</div>
<div class="a" style="left:0px;top:319.9px;width:2356px;height:1.3px;background:#b6b6b6;"></div>
<div class="a" style="left:0px;top:321.2px;width:2356px;height:3.7px;background:linear-gradient(#fbfbfb,#e4e4e4);"></div>
<div class="a" style="left:0px;top:324.9px;width:2356px;height:1.2px;background:#acacac;"></div>
<div class="a" style="left:0px;top:326px;width:2356px;height:51px;background:linear-gradient(#fefefe,#f6f6f6);"></div>
<div class="t" style="top:340px;line-height:25px;font-size:22.3px;color:#4d4d4d;left:70.2px;transform:translateX(-50%);">A</div>
<div class="a" style="left:80.0px;top:328px;width:1.5px;height:48px;background:#e8e8e8;"></div>
<div class="t" style="top:340px;line-height:25px;font-size:22.3px;color:#4d4d4d;left:281.7px;transform:translateX(-50%);">B</div>
<div class="a" style="left:480.2px;top:328px;width:1.5px;height:48px;background:#e8e8e8;"></div>
<div class="t" style="top:340px;line-height:25px;font-size:22.3px;color:#4d4d4d;left:626.9499999999999px;transform:translateX(-50%);">C</div>
<div class="a" style="left:770.5px;top:328px;width:1.5px;height:48px;background:#e8e8e8;"></div>
<div class="t" style="top:340px;line-height:25px;font-size:22.3px;color:#4d4d4d;left:949.9499999999999px;transform:translateX(-50%);">D</div>
<div class="a" style="left:1126.2px;top:328px;width:1.5px;height:48px;background:#e8e8e8;"></div>
<div class="t" style="top:340px;line-height:25px;font-size:22.3px;color:#4d4d4d;left:1347.8999999999999px;transform:translateX(-50%);">E</div>
<div class="a" style="left:1566.4px;top:328px;width:1.5px;height:48px;background:#e8e8e8;"></div>
<div class="t" style="top:340px;line-height:25px;font-size:22.3px;color:#4d4d4d;left:1745.8999999999999px;transform:translateX(-50%);">F</div>
<div class="a" style="left:1922.2px;top:328px;width:1.5px;height:48px;background:#e8e8e8;"></div>
<div class="t" style="top:340px;line-height:25px;font-size:22.3px;color:#4d4d4d;left:2138.05px;transform:translateX(-50%);">G</div>
<div class="a" style="left:2350.7px;top:328px;width:1.5px;height:48px;background:#e8e8e8;"></div>
<div class="a" style="left:0px;top:376.1px;width:2356px;height:2px;background:#b6b3b3;"></div>
<div class="a" style="left:0px;top:378.1px;width:57px;height:1323.9px;background:linear-gradient(90deg,#efefef 0%,#f8f8f8 45%,#fdfdfd 100%);"></div>
<div class="a" style="left:0px;top:396px;width:57px;height:441.5px;background:linear-gradient(90deg,#f5f5f5 0%,#ececec 60%,#e2e2e2 100%);"></div>
<div class="a" style="left:0;top:395.1px;width:57px;height:1.7px;background:linear-gradient(90deg,rgba(214,214,214,0),#d9d9d9 55%)"></div>
<div class="t" style="top:367px;line-height:26px;font-size:23.5px;color:#595959;left:28.7px;transform:translateX(-50%) scaleX(1.06);">1</div>
<div class="a" style="left:0;top:836.6px;width:57px;height:1.7px;background:linear-gradient(90deg,rgba(214,214,214,0),#d9d9d9 55%)"></div>
<div class="t" style="top:805px;line-height:31px;font-size:27.5px;color:#1e7145;left:28.2px;transform:translateX(-50%) scaleX(1.06);-webkit-text-stroke:.5px #1e7145;">2</div>
<div class="a" style="left:0;top:867.1px;width:57px;height:1.7px;background:linear-gradient(90deg,rgba(214,214,214,0),#d9d9d9 55%)"></div>
<div class="t" style="top:840px;line-height:26px;font-size:23.5px;color:#595959;left:28.7px;transform:translateX(-50%) scaleX(1.06);">3</div>
<div class="a" style="left:0;top:917.1px;width:57px;height:1.7px;background:linear-gradient(90deg,rgba(214,214,214,0),#d9d9d9 55%)"></div>
<div class="t" style="top:888px;line-height:26px;font-size:23.5px;color:#595959;left:28.7px;transform:translateX(-50%) scaleX(1.06);">4</div>
<div class="a" style="left:0;top:956.1px;width:57px;height:1.7px;background:linear-gradient(90deg,rgba(214,214,214,0),#d9d9d9 55%)"></div>
<div class="t" style="top:927px;line-height:26px;font-size:23.5px;color:#595959;left:28.7px;transform:translateX(-50%) scaleX(1.06);">5</div>
<div class="a" style="left:0;top:996.1px;width:57px;height:1.7px;background:linear-gradient(90deg,rgba(214,214,214,0),#d9d9d9 55%)"></div>
<div class="t" style="top:965px;line-height:26px;font-size:23.5px;color:#595959;left:28.7px;transform:translateX(-50%) scaleX(1.06);">6</div>
<div class="a" style="left:0;top:1028.1px;width:57px;height:1.7px;background:linear-gradient(90deg,rgba(214,214,214,0),#d9d9d9 55%)"></div>
<div class="t" style="top:1001px;line-height:26px;font-size:23.5px;color:#595959;left:28.7px;transform:translateX(-50%) scaleX(1.06);">7</div>
<div class="a" style="left:0;top:1060.1px;width:57px;height:1.7px;background:linear-gradient(90deg,rgba(214,214,214,0),#d9d9d9 55%)"></div>
<div class="t" style="top:1033px;line-height:26px;font-size:23.5px;color:#595959;left:28.7px;transform:translateX(-50%) scaleX(1.06);">8</div>
<div class="a" style="left:0;top:1092.1px;width:57px;height:1.7px;background:linear-gradient(90deg,rgba(214,214,214,0),#d9d9d9 55%)"></div>
<div class="t" style="top:1065px;line-height:26px;font-size:23.5px;color:#595959;left:28.7px;transform:translateX(-50%) scaleX(1.06);">9</div>
<div class="a" style="left:0;top:1222.1px;width:57px;height:1.7px;background:linear-gradient(90deg,rgba(214,214,214,0),#d9d9d9 55%)"></div>
<div class="t" style="top:1193px;line-height:26px;font-size:23.5px;color:#595959;left:28.7px;transform:translateX(-50%) scaleX(1.06);">10</div>
<div class="a" style="left:0;top:1262.1px;width:57px;height:1.7px;background:linear-gradient(90deg,rgba(214,214,214,0),#d9d9d9 55%)"></div>
<div class="t" style="top:1231px;line-height:26px;font-size:23.5px;color:#595959;left:28.7px;transform:translateX(-50%) scaleX(1.06);">11</div>
<div class="a" style="left:0;top:1294.1px;width:57px;height:1.7px;background:linear-gradient(90deg,rgba(214,214,214,0),#d9d9d9 55%)"></div>
<div class="t" style="top:1267px;line-height:26px;font-size:23.5px;color:#595959;left:28.7px;transform:translateX(-50%) scaleX(1.06);">12</div>
<div class="a" style="left:0;top:1326.1px;width:57px;height:1.7px;background:linear-gradient(90deg,rgba(214,214,214,0),#d9d9d9 55%)"></div>
<div class="t" style="top:1299px;line-height:26px;font-size:23.5px;color:#595959;left:28.7px;transform:translateX(-50%) scaleX(1.06);">13</div>
<div class="a" style="left:0;top:1358.1px;width:57px;height:1.7px;background:linear-gradient(90deg,rgba(214,214,214,0),#d9d9d9 55%)"></div>
<div class="t" style="top:1331px;line-height:26px;font-size:23.5px;color:#595959;left:28.7px;transform:translateX(-50%) scaleX(1.06);">14</div>
<div class="a" style="left:0;top:1390.3px;width:57px;height:1.7px;background:linear-gradient(90deg,rgba(214,214,214,0),#d9d9d9 55%)"></div>
<div class="t" style="top:1363px;line-height:26px;font-size:23.5px;color:#595959;left:28.7px;transform:translateX(-50%) scaleX(1.06);">15</div>
<div class="a" style="left:0;top:1428.1px;width:57px;height:1.7px;background:linear-gradient(90deg,rgba(214,214,214,0),#d9d9d9 55%)"></div>
<div class="t" style="top:1399px;line-height:26px;font-size:23.5px;color:#595959;left:28.7px;transform:translateX(-50%) scaleX(1.06);">16</div>
<div class="a" style="left:0;top:1468.6px;width:57px;height:1.7px;background:linear-gradient(90deg,rgba(214,214,214,0),#d9d9d9 55%)"></div>
<div class="t" style="top:1437px;line-height:26px;font-size:23.5px;color:#595959;left:28.7px;transform:translateX(-50%) scaleX(1.06);">17</div>
<div class="a" style="left:0;top:1500.1px;width:57px;height:1.7px;background:linear-gradient(90deg,rgba(214,214,214,0),#d9d9d9 55%)"></div>
<div class="t" style="top:1473px;line-height:26px;font-size:23.5px;color:#595959;left:28.7px;transform:translateX(-50%) scaleX(1.06);">18</div>
<div class="a" style="left:0;top:1532.1px;width:57px;height:1.7px;background:linear-gradient(90deg,rgba(214,214,214,0),#d9d9d9 55%)"></div>
<div class="t" style="top:1505px;line-height:26px;font-size:23.5px;color:#595959;left:28.7px;transform:translateX(-50%) scaleX(1.06);">19</div>
<div class="a" style="left:0;top:1564.1px;width:57px;height:1.7px;background:linear-gradient(90deg,rgba(214,214,214,0),#d9d9d9 55%)"></div>
<div class="t" style="top:1537px;line-height:26px;font-size:23.5px;color:#595959;left:28.7px;transform:translateX(-50%) scaleX(1.06);">20</div>
<div class="a" style="left:0;top:1596.1px;width:57px;height:1.7px;background:linear-gradient(90deg,rgba(214,214,214,0),#d9d9d9 55%)"></div>
<div class="t" style="top:1569px;line-height:26px;font-size:23.5px;color:#595959;left:28.7px;transform:translateX(-50%) scaleX(1.06);">21</div>
<div class="a" style="left:0;top:1634.1px;width:57px;height:1.7px;background:linear-gradient(90deg,rgba(214,214,214,0),#d9d9d9 55%)"></div>
<div class="t" style="top:1605px;line-height:26px;font-size:23.5px;color:#595959;left:28.7px;transform:translateX(-50%) scaleX(1.06);">22</div>
<div class="a" style="left:0;top:1674.6px;width:57px;height:1.7px;background:linear-gradient(90deg,rgba(214,214,214,0),#d9d9d9 55%)"></div>
<div class="t" style="top:1643px;line-height:26px;font-size:23.5px;color:#595959;left:28.7px;transform:translateX(-50%) scaleX(1.06);">23</div>
<div class="t" style="top:1679px;line-height:26px;font-size:23.5px;color:#595959;left:28.7px;transform:translateX(-50%) scaleX(1.06);">24</div>
<div class="a" style="left:24.1px;top:386.3px;width:11.6px;height:1.7px;background:#595959;"></div>
<div class="a" style="left:0px;top:326px;width:57px;height:50.5px;background:linear-gradient(#fefefe,#f6f6f6);"></div>
<div class="a" style="left:0px;top:376.1px;width:57px;height:2px;background:#b6b3b3;"></div>
<svg style="left:14px;top:334px" width="40" height="40" viewBox="14 334 40 40"><path d="M51.800 334.500v37.300h-37.700z" fill="#dedede"/></svg>
<div class="a" style="left:56.1px;top:325.8px;width:1.8px;height:1376.2px;background:#b4b4b4;"></div>
<div class="a" style="left:54.1px;top:396px;width:3.85px;height:441.8px;background:#1e7145;"></div>
<svg style="left:80.8px;top:378.1px" width="2271.2" height="457.79999999999995" viewBox="0 0 2271.2 457.79999999999995">
<defs><pattern id="dA" width="62.0" height="38.4" patternUnits="userSpaceOnUse" patternTransform="translate(39.80 9.50) skewY(0.115) translate(-15.500 -9.600)">
<ellipse cx="15.500" cy="9.600" rx="5.650" ry="5.100" fill="#e9f6f3"/><ellipse cx="45.500" cy="29.800" rx="5.650" ry="5.100" fill="#e9f6f3"/></pattern><pattern id="dB" width="62.0" height="38.4" patternUnits="userSpaceOnUse" patternTransform="translate(873.40 27.00) skewY(0.115) translate(-15.500 -9.600)">
<ellipse cx="15.500" cy="9.600" rx="5.650" ry="5.100" fill="#e9f6f3"/><ellipse cx="45.500" cy="29.800" rx="5.650" ry="5.100" fill="#e9f6f3"/></pattern><pattern id="dC" width="62.0" height="38.4" patternUnits="userSpaceOnUse" patternTransform="translate(1705.80 9.30) skewY(0.115) translate(-15.500 -9.600)">
<ellipse cx="15.500" cy="9.600" rx="5.650" ry="5.100" fill="#e9f6f3"/><ellipse cx="45.500" cy="29.800" rx="5.650" ry="5.100" fill="#e9f6f3"/></pattern></defs>
<rect width="2271.2" height="457.79999999999995" fill="#acdcd8"/>
<rect x="0" y="0" width="827.2" height="457.79999999999995" fill="url(#dA)"/>
<rect x="827.2" y="0" width="865.5" height="457.79999999999995" fill="url(#dB)"/>
<rect x="1692.7" y="0" width="578.4999999999998" height="457.79999999999995" fill="url(#dC)"/>
<rect x="5.200000000000003" y="189.89999999999998" width="2266" height="157.89999999999998" fill="#f8b0c5"/>
<path d="M1.2000000000000028 213.89999999999998H2271.2" stroke="#fff" stroke-width="8" stroke-dasharray="8 8" fill="none"/>
<path d="M-0.7999999999999972 317.9H2271.2" stroke="#fff" stroke-width="8" stroke-dasharray="8 8" fill="none"/>
</svg>
<div class="a" style="left:80px;top:692px;width:1px;height:8px;background:#fff;"></div>
<div class="a" style="left:332.100px;top:394.200px;width:429.900px;height:427.600px;border-radius:50%;background:#fff;border:10px solid #a8123e"></div>
<div class="t" style="top:525px;line-height:80px;font-size:71.5px;color:#a8123e;left:546.8px;transform:translateX(-50%);-webkit-text-stroke:1.300px #a8123e;">Baby</div>
<div class="t" style="top:612px;line-height:79px;font-size:71.2px;color:#a8123e;left:545.2px;transform:translateX(-50%);-webkit-text-stroke:1.300px #a8123e;">Shower</div>
<div class="a" style="left:80.8px;top:868px;width:2269.7px;height:50px;background:#f2f2f2;"></div>
<div class="t" style="top:880px;line-height:37px;font-size:32.8px;color:#585858;left:419.63px;transform:scaleX(0.9555);transform-origin:0 0;">For:</div>
<div class="t" style="top:880px;line-height:37px;font-size:32.8px;color:#585858;left:487.61px;transform:scaleX(0.9815);transform-origin:0 0;">Name</div>
<div class="t" style="top:877px;line-height:36px;font-size:32.3px;color:#585858;left:1030.77px;transform:scaleX(0.977);transform-origin:0 0;">When:</div>
<div class="t" style="top:877px;line-height:36px;font-size:32.3px;color:#585858;left:1133.45px;transform:scaleX(1.0003);transform-origin:0 0;">Date &amp; Time</div>
<div class="t" style="top:877px;line-height:36px;font-size:32.3px;color:#585858;left:1814.97px;transform:scaleX(0.9719);transform-origin:0 0;">Where:</div>
<div class="t" style="top:877px;line-height:36px;font-size:32.3px;color:#585858;left:1929.72px;transform:scaleX(1.0101);transform-origin:0 0;">Location</div>
<div class="a" style="left:397px;top:837px;width:1751.500px;height:104px;border:8px solid #ec1c24"></div>
<div class="t" style="top:925px;line-height:28px;font-size:25.8px;color:#585858;left:85.9px;transform:scaleX(0.9166);transform-origin:0 0;-webkit-text-stroke:.3px #585858;">GUESTS</div>
<div class="a" style="left:80px;top:957px;width:2270px;height:136px;background:#f2f2f2;"></div>
<div class="a" style="left:80px;top:956.35px;width:2272px;height:1.7px;background:#d4d4d4;"></div>
<div class="a" style="left:80px;top:994.1px;width:2272px;height:3.5px;background:#bababa;"></div>
<div class="a" style="left:80px;top:1028.45px;width:2272px;height:1.7px;background:#d4d4d4;"></div>
<div class="a" style="left:80px;top:1060.45px;width:2272px;height:1.7px;background:#d4d4d4;"></div>
<div class="a" style="left:80px;top:1092.45px;width:2272px;height:1.7px;background:#d4d4d4;"></div>
<div class="t" style="top:963px;line-height:28px;font-size:25.5px;color:#c8154d;left:85.8px;transform:scaleX(1.0471);transform-origin:0 0;-webkit-text-stroke:.75px #c8154d;">Name</div>
<div class="t" style="top:963px;line-height:28px;font-size:25.5px;color:#c8154d;left:484.9px;transform:scaleX(1.0682);transform-origin:0 0;-webkit-text-stroke:.75px #c8154d;">Relationship</div>
<div class="t" style="top:963px;line-height:28px;font-size:25.5px;color:#c8154d;left:775.8px;transform:scaleX(0.991);transform-origin:0 0;-webkit-text-stroke:.75px #c8154d;">RSVP Received</div>
<div class="t" style="top:963px;line-height:28px;font-size:25.5px;color:#c8154d;left:1131.2px;transform:scaleX(0.9839);transform-origin:0 0;-webkit-text-stroke:.75px #c8154d;">RSVP Response</div>
<div class="t" style="top:963px;line-height:28px;font-size:25.5px;color:#c8154d;left:1571px;transform:scaleX(1.017);transform-origin:0 0;-webkit-text-stroke:.75px #c8154d;">No. In Party</div>
<div class="t" style="top:963px;line-height:28px;font-size:25.5px;color:#c8154d;left:1926.9px;transform:scaleX(1.0214);transform-origin:0 0;-webkit-text-stroke:.75px #c8154d;">Address</div>
<div class="t" style="top:1002px;line-height:25px;font-size:22.5px;color:#000;left:85.8px;transform:scaleX(1.0297);transform-origin:0 0;">Name 1</div>
<div class="t" style="top:1002px;line-height:25px;font-size:22.5px;color:#000;left:484.9px;transform:scaleX(1.0314);transform-origin:0 0;">Sister</div>
<div class="t" style="top:1002px;line-height:25px;font-size:22.5px;color:#000;left:775.8px;transform:scaleX(0.9833);transform-origin:0 0;">Yes</div>
<div class="t" style="top:1002px;line-height:25px;font-size:22.5px;color:#000;left:1131.2px;transform:scaleX(0.9833);transform-origin:0 0;">Yes</div>
<div class="t" style="top:1002px;line-height:25px;font-size:22.5px;color:#000;left:1571px;transform:scaleX(1.09);transform-origin:0 0;">1</div>
<div class="t" style="top:1034px;line-height:25px;font-size:22.5px;color:#000;left:85.8px;transform:scaleX(1.0303);transform-origin:0 0;">Name 2</div>
<div class="t" style="top:1034px;line-height:25px;font-size:22.5px;color:#000;left:484.9px;transform:scaleX(1.0166);transform-origin:0 0;">Cousin</div>
<div class="t" style="top:1034px;line-height:25px;font-size:22.5px;color:#000;left:775.8px;transform:scaleX(0.9833);transform-origin:0 0;">Yes</div>
<div class="t" style="top:1034px;line-height:25px;font-size:22.5px;color:#000;left:1131.2px;transform:scaleX(1.0736);transform-origin:0 0;">No</div>
<div class="t" style="top:1034px;line-height:25px;font-size:22.5px;color:#000;left:1571px;transform:scaleX(1.09);transform-origin:0 0;">0</div>
<div class="t" style="top:1066px;line-height:25px;font-size:22.5px;color:#000;left:85.8px;transform:scaleX(1.0282);transform-origin:0 0;">Name 3</div>
<div class="t" style="top:1066px;line-height:25px;font-size:22.5px;color:#000;left:484.9px;transform:scaleX(0.9941);transform-origin:0 0;">Sister-in-law</div>
<div class="t" style="top:1066px;line-height:25px;font-size:22.5px;color:#000;left:775.8px;transform:scaleX(0.9833);transform-origin:0 0;">Yes</div>
<div class="t" style="top:1066px;line-height:25px;font-size:22.5px;color:#000;left:1131.2px;transform:scaleX(0.9833);transform-origin:0 0;">Yes</div>
<div class="t" style="top:1066px;line-height:25px;font-size:22.5px;color:#000;left:1571px;transform:scaleX(1.09);transform-origin:0 0;">1</div>
<div class="t" style="top:1191px;line-height:28px;font-size:25.8px;color:#585858;left:85.8px;transform:scaleX(0.9875);transform-origin:0 0;-webkit-text-stroke:.3px #585858;">FOOD/DRINKS</div>
<div class="a" style="left:80px;top:1222.15px;width:691.3px;height:1.7px;background:#d4d4d4;"></div>
<div class="t" style="top:1229px;line-height:28px;font-size:25.5px;color:#c8154d;left:85.9px;transform:scaleX(1.0692);transform-origin:0 0;-webkit-text-stroke:.75px #c8154d;">Item</div>
<div class="t" style="top:1229px;line-height:28px;font-size:25.5px;color:#c8154d;right:1590.5px;transform:scaleX(1.0054);transform-origin:100% 0;-webkit-text-stroke:.75px #c8154d;">Cost</div>
<div class="a" style="left:80px;top:1263px;width:691.3px;height:32px;background:#f2f2f2;"></div>
<div class="a" style="left:80px;top:1294.45px;width:691.3px;height:1.7px;background:#d4d4d4;"></div>
<div class="t" style="top:1268px;line-height:25px;font-size:22.5px;color:#000;left:85.9px;transform:scaleX(1.0212);transform-origin:0 0;">Vegetable platter</div>
<div class="t" style="top:1268px;line-height:25px;font-size:22.5px;color:#000;right:1590.5px;transform:scaleX(1.0923);transform-origin:100% 0;">$14.95</div>
<div class="a" style="left:80px;top:1295px;width:691.3px;height:32px;background:#f2f2f2;"></div>
<div class="a" style="left:80px;top:1326.45px;width:691.3px;height:1.7px;background:#d4d4d4;"></div>
<div class="t" style="top:1300px;line-height:25px;font-size:22.5px;color:#000;left:85.9px;transform:scaleX(1.0335);transform-origin:0 0;">2 liters sparkling water</div>
<div class="t" style="top:1300px;line-height:25px;font-size:22.5px;color:#000;right:1590.5px;transform:scaleX(1.0907);transform-origin:100% 0;">$2.19</div>
<div class="a" style="left:80px;top:1259.8px;width:691.3px;height:3.5px;background:#bababa;"></div>
<div class="t" style="top:1397px;line-height:28px;font-size:25.8px;color:#585858;left:85.8px;transform:scaleX(0.9297);transform-origin:0 0;-webkit-text-stroke:.3px #585858;">DECORATIONS</div>
<div class="a" style="left:80px;top:1428.15px;width:691.3px;height:1.7px;background:#d4d4d4;"></div>
<div class="t" style="top:1435px;line-height:28px;font-size:25.5px;color:#c8154d;left:85.9px;transform:scaleX(1.0692);transform-origin:0 0;-webkit-text-stroke:.75px #c8154d;">Item</div>
<div class="t" style="top:1435px;line-height:28px;font-size:25.5px;color:#c8154d;right:1590.5px;transform:scaleX(1.0054);transform-origin:100% 0;-webkit-text-stroke:.75px #c8154d;">Cost</div>
<div class="a" style="left:80px;top:1469.5px;width:691.3px;height:31.5px;background:#f2f2f2;"></div>
<div class="a" style="left:80px;top:1500.45px;width:691.3px;height:1.7px;background:#d4d4d4;"></div>
<div class="t" style="top:1474px;line-height:25px;font-size:22.5px;color:#000;left:85.9px;transform:scaleX(1.0341);transform-origin:0 0;">Helium balloons</div>
<div class="t" style="top:1474px;line-height:25px;font-size:22.5px;color:#000;right:1590.5px;transform:scaleX(1.0912);transform-origin:100% 0;">$12.00</div>
<div class="a" style="left:80px;top:1501px;width:691.3px;height:32px;background:#f2f2f2;"></div>
<div class="a" style="left:80px;top:1532.45px;width:691.3px;height:1.7px;background:#d4d4d4;"></div>
<div class="a" style="left:80px;top:1466.3px;width:691.3px;height:3.5px;background:#bababa;"></div>
<div class="t" style="top:1603px;line-height:28px;font-size:25.8px;color:#585858;left:85.8px;transform:scaleX(0.9205);transform-origin:0 0;-webkit-text-stroke:.3px #585858;">OTHER SUPPLIES</div>
<div class="a" style="left:80px;top:1634.15px;width:691.3px;height:1.7px;background:#d4d4d4;"></div>
<div class="t" style="top:1641px;line-height:28px;font-size:25.5px;color:#c8154d;left:85.9px;transform:scaleX(1.0692);transform-origin:0 0;-webkit-text-stroke:.75px #c8154d;">Item</div>
<div class="t" style="top:1641px;line-height:28px;font-size:25.5px;color:#c8154d;right:1590.5px;transform:scaleX(1.0054);transform-origin:100% 0;-webkit-text-stroke:.75px #c8154d;">Cost</div>
<div class="a" style="left:80px;top:1675.5px;width:691.3px;height:32.0px;background:#f2f2f2;"></div>
<div class="t" style="top:1680px;line-height:25px;font-size:22.5px;color:#000;left:85.9px;transform:scaleX(1.022);transform-origin:0 0;">Paper plates</div>
<div class="t" style="top:1680px;line-height:25px;font-size:22.5px;color:#000;right:1590.5px;transform:scaleX(1.0889);transform-origin:100% 0;">$5.96</div>
<div class="a" style="left:80px;top:1672.3px;width:691.3px;height:3.5px;background:#bababa;"></div>
<svg style="left:763px;top:1318px" width="8" height="8" viewBox="0 0 8 8"><path d="M8 0v8h-8v-3.500h4.500v-4.500z" fill="#3f51b5"/></svg>
<svg style="left:763px;top:1524px" width="8" height="8" viewBox="0 0 8 8"><path d="M8 0v8h-8v-3.500h4.500v-4.500z" fill="#3f51b5"/></svg>
<svg style="left:2341.8px;top:1084px" width="8" height="8" viewBox="0 0 8 8"><path d="M8 0v8h-8v-3.500h4.500v-4.500z" fill="#3f51b5"/></svg>
<div class="a" style="left:941.8px;top:1187px;width:10.2px;height:520px;background:#c5144b;"></div>
<div class="t" style="top:1191px;line-height:28px;font-size:25.8px;color:#585858;left:1131.9px;transform:scaleX(0.9424);transform-origin:0 0;-webkit-text-stroke:.3px #585858;">TASK LIST</div>
<div class="a" style="left:1126px;top:1223px;width:1224px;height:485px;background:#f2f2f2;"></div>
<div class="a" style="left:1126px;top:1222.15px;width:1226px;height:1.7px;background:#d4d4d4;"></div>
<div class="a" style="left:1126px;top:1259.8px;width:1226px;height:3.5px;background:#bababa;"></div>
<div class="t" style="top:1229px;line-height:28px;font-size:25.5px;color:#c8154d;left:1131.2px;transform:scaleX(1.0507);transform-origin:0 0;-webkit-text-stroke:.75px #c8154d;">Task</div>
<div class="t" style="top:1229px;line-height:28px;font-size:25.5px;color:#c8154d;left:1571px;transform:scaleX(1.0429);transform-origin:0 0;-webkit-text-stroke:.75px #c8154d;">Time</div>
<div class="t" style="top:1229px;line-height:28px;font-size:25.5px;color:#c8154d;left:1926.9px;transform:scaleX(1.0574);transform-origin:0 0;-webkit-text-stroke:.75px #c8154d;">Notes</div>
<div class="a" style="left:1126px;top:1294.45px;width:1226px;height:1.7px;background:#d4d4d4;"></div>
<div class="t" style="top:1268px;line-height:25px;font-size:22.5px;color:#000;left:1131.2px;transform:scaleX(1.0259);transform-origin:0 0;">Send invitations</div>
<div class="t" style="top:1268px;line-height:25px;font-size:22.5px;color:#000;left:1571px;transform:scaleX(1.0429);transform-origin:0 0;">Date</div>
<div class="a" style="left:1126px;top:1326.45px;width:1226px;height:1.7px;background:#d4d4d4;"></div>
<div class="t" style="top:1300px;line-height:25px;font-size:22.5px;color:#000;left:1131.2px;transform:scaleX(1.0194);transform-origin:0 0;">Shop for decorations</div>
<div class="t" style="top:1300px;line-height:25px;font-size:22.5px;color:#000;left:1571px;transform:scaleX(1.0429);transform-origin:0 0;">Date</div>
<div class="a" style="left:1126px;top:1358.45px;width:1226px;height:1.7px;background:#d4d4d4;"></div>
<div class="t" style="top:1332px;line-height:25px;font-size:22.5px;color:#000;left:1131.2px;transform:scaleX(0.9963);transform-origin:0 0;">Organize music</div>
<div class="t" style="top:1332px;line-height:25px;font-size:22.5px;color:#000;left:1571px;transform:scaleX(1.0429);transform-origin:0 0;">Date</div>
<div class="a" style="left:1126px;top:1390.65px;width:1226px;height:1.7px;background:#d4d4d4;"></div>
<div class="t" style="top:1364px;line-height:25px;font-size:22.5px;color:#000;left:1131.2px;transform:scaleX(1.0087);transform-origin:0 0;">Shop for groceries</div>
<div class="t" style="top:1364px;line-height:25px;font-size:22.5px;color:#000;left:1571px;transform:scaleX(1.0429);transform-origin:0 0;">Date</div>
<div class="a" style="left:1126px;top:1428.45px;width:1226px;height:1.7px;background:#d4d4d4;"></div>
<div class="t" style="top:1400px;line-height:25px;font-size:22.5px;color:#000;left:1131.2px;transform:scaleX(1.0445);transform-origin:0 0;">Bake</div>
<div class="t" style="top:1400px;line-height:25px;font-size:22.5px;color:#000;left:1571px;transform:scaleX(1.0429);transform-origin:0 0;">Date</div>
<div class="a" style="left:1126px;top:1468.95px;width:1226px;height:1.7px;background:#d4d4d4;"></div>
<div class="t" style="top:1438px;line-height:25px;font-size:22.5px;color:#000;left:1131.2px;transform:scaleX(1.0079);transform-origin:0 0;">Borrow chairs, hangers</div>
<div class="t" style="top:1438px;line-height:25px;font-size:22.5px;color:#000;left:1571px;transform:scaleX(1.0429);transform-origin:0 0;">Date</div>
<div class="t" style="top:1438px;line-height:25px;font-size:22.5px;color:#000;left:1926.9px;transform:scaleX(1.019);transform-origin:0 0;">Borrow from neighbors</div>
<div class="a" style="left:1126px;top:1500.45px;width:1226px;height:1.7px;background:#d4d4d4;"></div>
<div class="t" style="top:1474px;line-height:25px;font-size:22.5px;color:#000;left:1131.2px;transform:scaleX(1.0234);transform-origin:0 0;">Put up decorations</div>
<div class="t" style="top:1474px;line-height:25px;font-size:22.5px;color:#000;left:1571px;transform:scaleX(1.0429);transform-origin:0 0;">Date</div>
<div class="t" style="top:1474px;line-height:25px;font-size:22.5px;color:#000;left:1926.9px;transform:scaleX(1.0373);transform-origin:0 0;">Birgit will help</div>
<div class="a" style="left:1126px;top:1532.45px;width:1226px;height:1.7px;background:#d4d4d4;"></div>
<div class="t" style="top:1506px;line-height:25px;font-size:22.5px;color:#000;left:1131.2px;transform:scaleX(1.0137);transform-origin:0 0;">Pick up flowers</div>
<div class="t" style="top:1506px;line-height:25px;font-size:22.5px;color:#000;left:1571px;transform:scaleX(1.0429);transform-origin:0 0;">Date</div>
<div class="t" style="top:1506px;line-height:25px;font-size:22.5px;color:#000;left:1926.9px;transform:scaleX(1.004);transform-origin:0 0;">Stop by on way home from work</div>
<div class="a" style="left:1126px;top:1564.45px;width:1226px;height:1.7px;background:#d4d4d4;"></div>
<div class="t" style="top:1538px;line-height:25px;font-size:22.5px;color:#000;left:1131.2px;transform:scaleX(1.0216);transform-origin:0 0;">Prepare all other food</div>
<div class="t" style="top:1538px;line-height:25px;font-size:22.5px;color:#000;left:1571px;transform:scaleX(1.0429);transform-origin:0 0;">Date</div>
<div class="a" style="left:1126px;top:1596.45px;width:1226px;height:1.7px;background:#d4d4d4;"></div>
<div class="t" style="top:1570px;line-height:25px;font-size:22.5px;color:#000;left:1131.2px;transform:scaleX(1.0262);transform-origin:0 0;">Rearrange furniture</div>
<div class="t" style="top:1570px;line-height:25px;font-size:22.5px;color:#000;left:1571px;transform:scaleX(1.0429);transform-origin:0 0;">Date</div>
<div class="a" style="left:1126px;top:1634.45px;width:1226px;height:1.7px;background:#d4d4d4;"></div>
<div class="t" style="top:1606px;line-height:25px;font-size:22.5px;color:#000;left:1131.2px;transform:scaleX(1.0103);transform-origin:0 0;">Lay out food</div>
<div class="t" style="top:1606px;line-height:25px;font-size:22.5px;color:#000;left:1571px;transform:scaleX(1.0005);transform-origin:0 0;">Time</div>
<div class="a" style="left:1126px;top:1674.95px;width:1226px;height:1.7px;background:#d4d4d4;"></div>
<div class="t" style="top:1644px;line-height:25px;font-size:22.5px;color:#000;left:1131.2px;transform:scaleX(1.0197);transform-origin:0 0;">Light candles</div>
<div class="t" style="top:1644px;line-height:25px;font-size:22.5px;color:#000;left:1571px;transform:scaleX(1.0005);transform-origin:0 0;">Time</div>
<div class="t" style="top:1680px;line-height:25px;font-size:22.5px;color:#000;left:1131.2px;transform:scaleX(1.0024);transform-origin:0 0;">Play party music</div>
<div class="t" style="top:1680px;line-height:25px;font-size:22.5px;color:#000;left:1571px;transform:scaleX(1.0005);transform-origin:0 0;">Time</div>
<div class="a" style="left:0px;top:1702.3px;width:2356px;height:52px;background:#f1f1f1;"></div>
<div class="a" style="left:0px;top:1701.6px;width:2356px;height:1.4px;background:#c4c4c4;"></div>
<svg style="left:28px;top:1716px" width="64" height="26" viewBox="28 1716 64 26"><path d="M44.200 1718.600v20.500l-14.700 -10.250z" fill="#c2c2c2"/><path d="M75.900 1718.600v20.500l14.700 -10.250z" fill="#ababab"/></svg>
<div class="a" style="left:120.2px;top:1705px;width:1.5px;height:40px;background:#cdcdcd;"></div>
<div class="a" style="left:122.800px;top:1702.300px;width:142px;height:7.300px;background:#f5b8c9;border-radius:0 0 0 3px"></div>
<div class="t" style="top:1713px;line-height:27px;font-size:24px;color:#666;left:194px;transform:translateX(-50%);">Start</div>
<div class="a" style="left:267.400px;top:1702.300px;width:197.300px;height:45px;background:#fff;border-radius:0 0 5px 5px;box-shadow:0 1.500px 2px rgba(0,0,0,.38);border-bottom:5.800px solid #d8e9ed"></div>
<div class="t" style="top:1713px;line-height:27px;font-size:24px;color:#5a5a5a;font-weight:700;letter-spacing:-0.1px;left:366.4px;transform:translateX(-50%);">Baby Shower</div>
<svg style="left:493px;top:1716px" width="24" height="24" viewBox="493 1716 24 24"><path d="M504.100 1717.300v20.400M493.900 1727.500h20.400" stroke="#444" stroke-width="3.200"/></svg>
<div class="a" style="left:540.1px;top:1705px;width:1.5px;height:40px;background:#cdcdcd;"></div>
<div class="a" style="left:0px;top:1756px;width:2356px;height:44px;background:linear-gradient(#e7e7e7,#dadada);"></div>
<div class="a" style="left:0px;top:1753.8px;width:2356px;height:2.2px;background:#a6a6a6;"></div>
<div class="t" style="top:1766px;line-height:26px;font-size:23px;color:#5e5e5e;letter-spacing:1.0px;left:54px;">Enter</div>
<svg style="left:2140px;top:1760px" width="190" height="36" viewBox="2140 1760 190 36">
<g fill="none" stroke="#646464" stroke-width="1.800" stroke-linejoin="round">
<rect x="2149.200" y="1765.100" width="23.500" height="23.500" rx="1"/><path d="M2157 1765.100v23.500M2164.900 1765.100v23.500M2149.200 1772.900h23.500M2149.200 1780.800h23.500"/>
<rect x="2219.100" y="1765.100" width="25.500" height="23.500" rx="1"/><path d="M2219.100 1779h15.900v-13.900M2226.900 1765.100v13.900"/>
<rect x="2292.400" y="1765.100" width="25.300" height="23.500" rx="1"/><rect x="2298.200" y="1769.400" width="13.700" height="15.100"/><path d="M2301.200 1773.200h7.800M2301.200 1777.300h7.800M2301.200 1781.300h7.800" stroke-width="1.600"/>
</g></svg>
</body></html>
